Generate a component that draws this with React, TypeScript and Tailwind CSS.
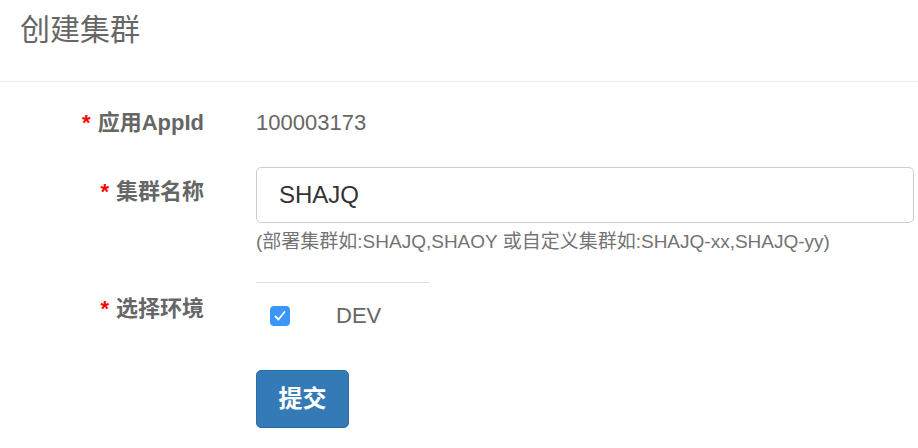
import React from "react";

const font = "font-['Liberation_Sans','Noto_Sans_CJK_SC',sans-serif]";

function Label({ text }: { text: string }) {
  return (
    <div className="flex justify-end items-center text-[22px] leading-[30px] font-bold text-[#666]">
      <span className="text-[#f00] mr-[7px]">*</span>
      <span>{text}</span>
    </div>
  );
}

function Checkbox() {
  return (
    <div className="w-[20px] h-[20px] rounded-[4px] bg-[#3a97f8] flex items-center justify-center">
      <svg width="16" height="16" viewBox="0 0 16 16" fill="none">
        <path d="M3.5 8.5 L6.5 11.5 L12.5 4" stroke="#fff" strokeWidth="1.8" strokeLinecap="round" strokeLinejoin="round" />
      </svg>
    </div>
  );
}

export default function App() {
  return (
    <div className={`w-[918px] h-[448px] bg-white overflow-hidden ${font}`}>
      <div className="h-[82px] border-b border-[#e9edf2] pl-5 pt-[15px]">
        <h1 className="text-[30px] leading-[30px] font-normal text-[#666]">创建集群</h1>
      </div>
      <div className="grid grid-cols-[204px_658px] gap-x-[52px] pt-[26px]">
        <Label text="应用AppId" />
        <div className="text-[22px] leading-[30px] text-[#666]">100003173</div>

        <div className="pt-[10px] mt-[29px]">
          <Label text="集群名称" />
        </div>
        <div className="mt-[29px]">
          <div className="h-[56px] border border-[#ccc] rounded-[5px] flex items-center pl-[22px] text-[24px] text-[#333]">
            SHAJQ
          </div>
          <p className="mt-[7px] text-[19px] leading-[24px] text-[#737373]">
            (部署集群如:SHAJQ,SHAOY 或自定义集群如:SHAJQ-xx,SHAJQ-yy)
          </p>
          <div className="mt-[28px] w-[173px] border-t border-[#ddd]" />
        </div>

        <div className="pt-[11px]">
          <Label text="选择环境" />
        </div>
        <div className="flex items-center pt-[21px]">
          <div className="ml-[14px]">
            <Checkbox />
          </div>
          <span className="ml-[46px] text-[22px] leading-[24px] text-[#666]">DEV</span>
        </div>

        <div />
        <div className="pt-[42px]">
          <button className="w-[93px] h-[58px] rounded-[5px] bg-[#337ab7] border border-[#2e6da4] text-white text-[24px] font-bold">
            提交
          </button>
        </div>
      </div>
    </div>
  );
}
